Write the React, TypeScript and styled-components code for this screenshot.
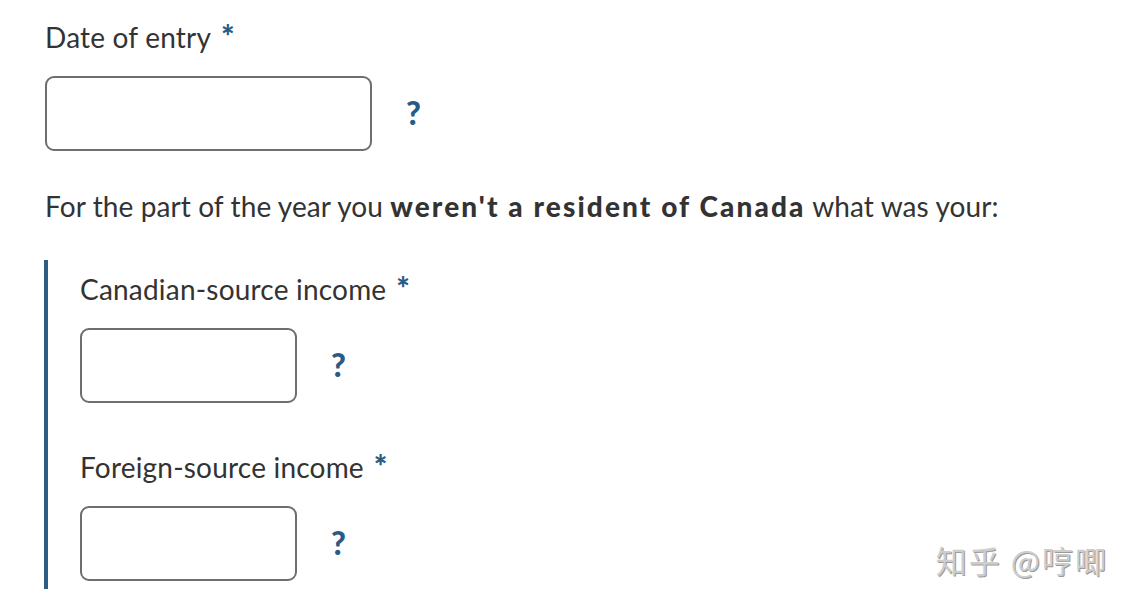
import React from "react";
import styled, { createGlobalStyle } from "styled-components";

const GlobalStyle = createGlobalStyle`
  html, body {
    margin: 0;
    padding: 0;
    background: #fff;
  }
  body {
    font-family: Lato, "Noto Sans", sans-serif;
    color: #333;
  }
`;

const Page = styled.div`
  position: relative;
  width: 1136px;
  height: 612px;
  overflow: hidden;
  padding: 17px 0 0 45px;
  box-sizing: border-box;
`;

const Field = styled.div`
  display: flex;
  flex-direction: column;
  gap: 19px;
`;

const Label = styled.label`
  font-size: 28px;
  line-height: 40px;
  letter-spacing: 0.2px;
  color: #333;
`;

const Star = styled.span`
  color: #2a5b83;
  font-weight: 900;
  font-size: 32px;
  line-height: 0;
  margin-left: 10px;
`;

const InputRow = styled.div`
  display: flex;
  align-items: center;
`;

const Input = styled.input<{ $w: number }>`
  width: ${(p) => p.$w}px;
  height: 75px;
  box-sizing: border-box;
  border: 2px solid #6e6e6e;
  border-radius: 9px;
  background: #fff;
  font: inherit;
  font-size: 24px;
  padding: 0 14px;
  outline: none;
`;

const Help = styled.span`
  margin-left: 34px;
  margin-top: -2px;
  color: #2a5b83;
  font-weight: 900;
  font-size: 32px;
  line-height: 1;
`;

const Intro = styled.p`
  margin: 35px 0 0;
  font-size: 28px;
  line-height: 40px;
  letter-spacing: 0.1px;
  color: #333;

  strong {
    font-weight: 900;
    letter-spacing: 2.1px;
    color: #333;
  }
`;

const Group = styled.div`
  margin-top: 34px;
  margin-left: -1px;
  border-left: 4px solid #2b5d84;
  padding: 9px 0 8px 32px;
  display: flex;
  flex-direction: column;
  gap: 44px;
`;

const Watermark = styled.div`
  position: absolute;
  right: 28px;
  bottom: 30px;
  font-family: "Noto Sans CJK SC", "Noto Sans", sans-serif;
  font-size: 31px;
  letter-spacing: 2px;
  color: #cdcdcd;
  text-shadow: 1px 1px 0 #9a9a9a;
`;

const FormField: React.FC<{ label: string; width: number }> = ({ label, width }) => (
  <Field>
    <Label>
      {label}
      <Star>*</Star>
    </Label>
    <InputRow>
      <Input $w={width} type="text" aria-label={label} />
      <Help>?</Help>
    </InputRow>
  </Field>
);

export default function App() {
  return (
    <>
      <GlobalStyle />
      <Page>
        <FormField label="Date of entry" width={327} />
        <Intro>
          For the part of the year you <strong>weren't a resident of Canada</strong> what was your:
        </Intro>
        <Group>
          <FormField label="Canadian-source income" width={217} />
          <FormField label="Foreign-source income" width={217} />
        </Group>
        <Watermark>知乎 @哼唧</Watermark>
      </Page>
    </>
  );
}
